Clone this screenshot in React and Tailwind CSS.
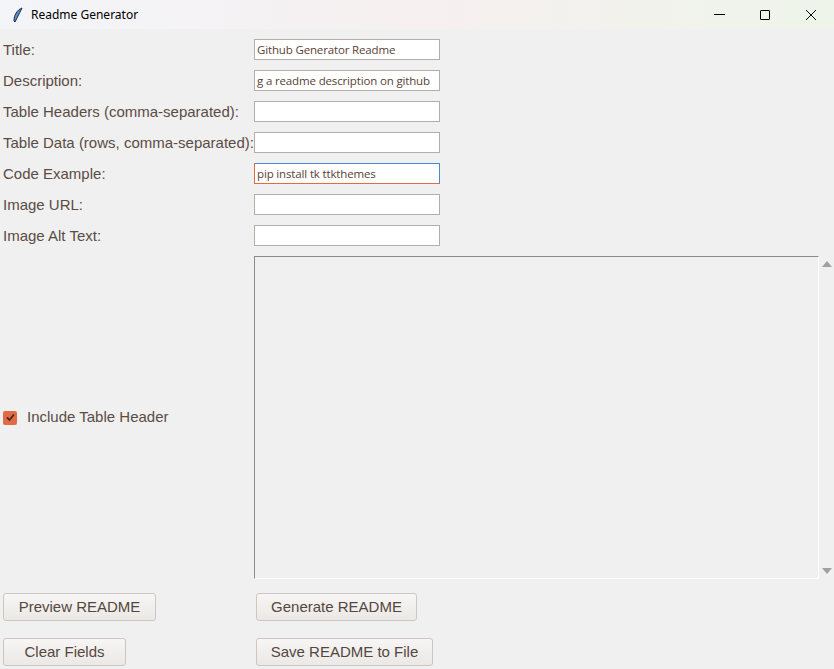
export default function App() {
  const rows = [
    ["Title:", "Github Generator Readme"],
    ["Description:", "g a readme description on github"],
    ["Table Headers (comma-separated):", ""],
    ["Table Data (rows, comma-separated):", ""],
    ["Code Example:", "pip install tk ttkthemes", true],
    ["Image URL:", ""],
    ["Image Alt Text:", ""],
  ];
  const lab = { fontFamily: '"Liberation Sans", Arial, sans-serif' };
  const ent = { fontFamily: '"Open Sans", "Noto Sans", sans-serif' };
  const Btn = ({ w, children }) => (
    <div className={`h-[28px] ${w} flex items-center justify-center rounded-[3px] border border-[#cdc6c0] bg-gradient-to-b from-[#f7f6f5] to-[#ebe8e5] text-[15px] text-[#54473f]`} style={lab}>{children}</div>
  );
  return (
    <div className="w-[834px] h-[669px] bg-[#f0f0f0] overflow-hidden relative">
      <div className="h-[29px] bg-gradient-to-r from-[#f3f5f9] via-[#f6f0f0] to-[#eef4ea] flex items-center">
        <svg width="12" height="16" viewBox="0 0 12 16" className="ml-[12px]">
          <path d="M10 1 C5 3 2 8 2 14 L3 15 C5 10 8 6 10 1Z" fill="#5a8fd0" stroke="#1a2a4a" strokeWidth="1" />
        </svg>
        <span className="ml-[7px] text-[12px] text-black" style={{ fontFamily: '"Noto Sans", sans-serif' }}>Readme Generator</span>
        <div className="ml-auto flex items-center">
          <div className="w-[46px] flex justify-center"><div className="w-[11px] h-px bg-black" /></div>
          <div className="w-[46px] flex justify-center"><div className="w-[10px] h-[10px] border border-black rounded-[1px]" /></div>
          <div className="w-[46px] flex justify-center">
            <svg width="12" height="12" viewBox="0 0 12 12"><path d="M1 1L11 11M11 1L1 11" stroke="#000" strokeWidth="1" /></svg>
          </div>
        </div>
      </div>
      <div className="flex flex-col pt-[10px] gap-[10px]">
        {rows.map(([l, v, focus]) => (
          <div key={l} className="flex items-center h-[21px]">
            <div className="w-[254px] pl-[3px] pt-[1px] text-[15px] text-[#5a4c44]" style={lab}>{l}</div>
            <div className={`w-[186px] h-[21px] bg-white flex items-center px-[2px] text-[11.5px] tracking-[-0.15px] text-[#5a4236] whitespace-nowrap overflow-hidden ${focus ? "border border-[#4a8ad4] border-l-[#e06c45] border-b-[#e06c45]" : "border border-[#b8aca4]"}`} style={ent}>{v}</div>
          </div>
        ))}
        <div className="flex h-[323px]">
          <div className="w-[254px] flex items-center pl-[3px] gap-[10px]">
            <div className="w-[14px] h-[14px] bg-[#e06c45] rounded-[2px] flex items-center justify-center">
              <svg width="11" height="11" viewBox="0 0 11 11"><path d="M2 5.5L4.5 8L9 2.5" stroke="#4a2a20" strokeWidth="1.8" fill="none" /></svg>
            </div>
            <span className="text-[15px] text-[#5a4c44]" style={lab}>Include Table Header</span>
          </div>
          <div className="w-[565px] border-l border-t border-[#8a8a8a] border-r border-r-white border-b border-b-white bg-[#f0f0f0]" />
          <div className="w-[15px] flex flex-col items-center justify-between py-[5px]">
            <div className="w-0 h-0 border-l-[5px] border-r-[5px] border-b-[6px] border-l-transparent border-r-transparent border-b-[#a0a0a0]" />
            <div className="w-0 h-0 border-l-[5px] border-r-[5px] border-t-[6px] border-l-transparent border-r-transparent border-t-[#a0a0a0]" />
          </div>
        </div>
      </div>
      <div className="flex mt-[14px]">
        <div className="w-[256px] pl-[3px]"><Btn w="w-[153px]">Preview README</Btn></div>
        <Btn w="w-[161px]">Generate README</Btn>
      </div>
      <div className="flex mt-[17px]">
        <div className="w-[256px] pl-[3px]"><Btn w="w-[123px]">Clear Fields</Btn></div>
        <Btn w="w-[177px]">Save README to File</Btn>
      </div>
    </div>
  );
}
